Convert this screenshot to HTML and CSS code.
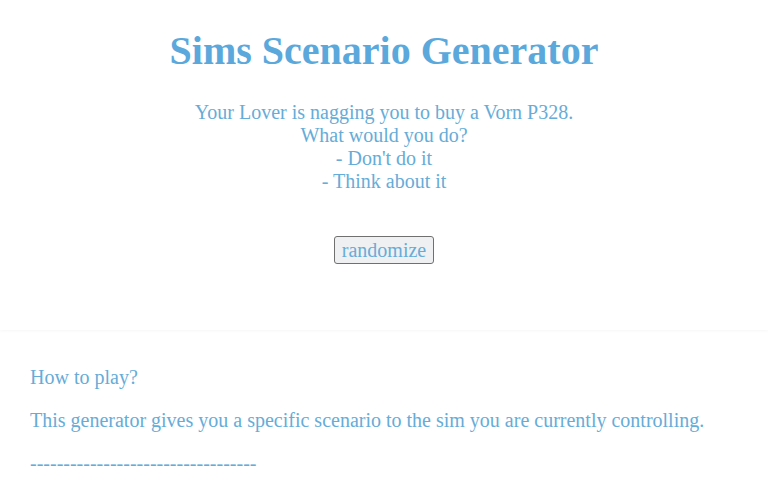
FILE: index.html
```html
<!DOCTYPE html>
<html lang="en">
<head>
    <meta charset="UTF-8">
    <meta name="viewport" content="width=device-width, initial-scale=1.0">
    <title>Sims Scenario Generator</title>
    <link rel="stylesheet" href="styles.css">
</head>
<body>
    <div class="generator">
        <h1>Sims Scenario Generator</h1>
        <div class="scenario" id="scenario">
            Your Lover is nagging you to buy a Vorn P328.<br>
            What would you do?<br>
            - Don't do it<br>
            - Think about it
        </div>
        <button class="randomize">randomize</button>
    </div>
    <div class="info">
        <p>How to play?</p>
        <p>This generator gives you a specific scenario to the sim you are currently controlling.</p>
        <p>----------------------------------</p>
    </div>
</body>
</html>
```

FILE: styles.css
```css
body {
    margin: 0;
    font-family: "Liberation Serif", "Times New Roman", serif;
    font-size: 20px;
    color: #66acd8;
    background-color: #ffffff;
}
.generator {
    text-align: center;
    padding: 27px 0 66px;
    box-shadow: 0 1px 3px rgba(0, 0, 0, 0.04);
}
h1 {
    font-size: 40px;
    color: #5aa8dc;
    margin: 0 0 27px;
}
.scenario {
    line-height: 23px;
    margin-bottom: 43px;
}
.randomize {
    font-family: inherit;
    font-size: 20px;
    line-height: 23px;
    color: #66acd8;
    background-color: #eff0f2;
    border: 1px solid #707070;
    border-radius: 3px;
    padding: 2px 7px 1px;
}
.info {
    padding: 36px 30px 0;
}
.info p {
    margin: 0 0 20px;
    line-height: 23px;
}
```
